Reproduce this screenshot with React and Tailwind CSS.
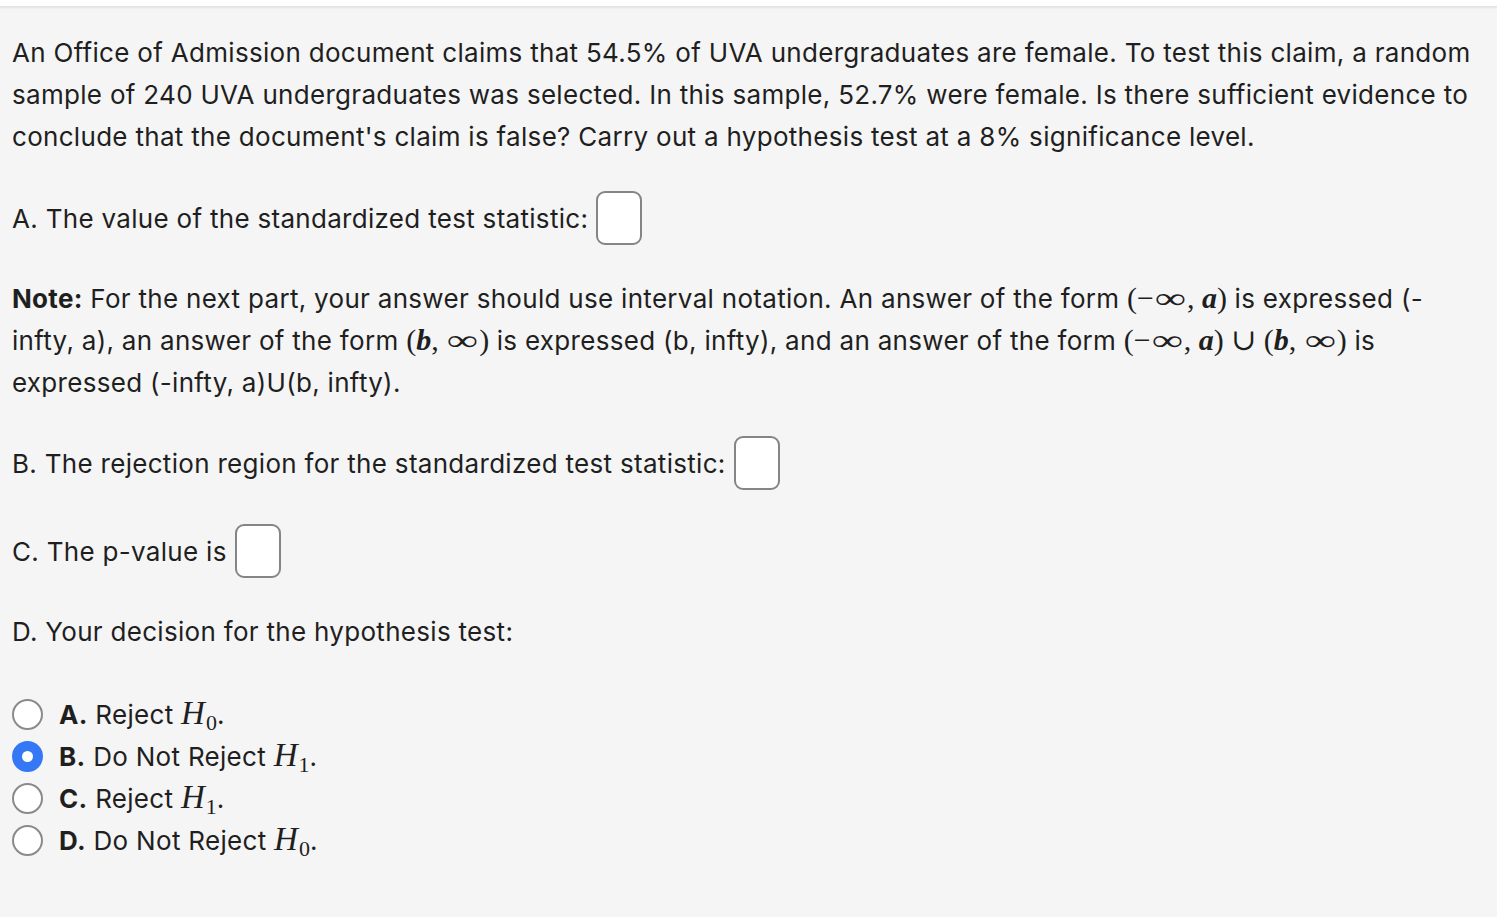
import React from 'react'

const serif = "font-['Liberation_Serif','DejaVu_Serif',serif]"

function M({ children }) {
  return <span className={`${serif} text-[30px] leading-none tracking-normal`}>{children}</span>
}
function I({ children }) {
  return <span className="italic font-semibold">{children}</span>
}
function Inf() {
  return (
    <span className="inline-block w-[33px] text-center">
      <span className="inline-block scale-x-[1.5] text-[29px]">∞</span>
    </span>
  )
}

function Box() {
  return <span className="inline-block ml-[8px] w-[46px] h-[54px] rounded-[9px] border-2 border-[#858585] bg-white shrink-0" />
}

function H({ sub }) {
  return (
    <span className={`${serif} text-[33px] tracking-normal`}>
      <span className="italic">H</span>
      <span className="text-[22px] relative top-[6px] ml-[1px]">{sub}</span>
    </span>
  )
}

function Radio({ checked }) {
  if (checked) {
    return (
      <span className="w-[31px] h-[31px] rounded-full bg-[#3478f6] flex items-center justify-center shrink-0">
        <span className="w-[11px] h-[11px] rounded-full bg-white" />
      </span>
    )
  }
  return <span className="w-[31px] h-[31px] rounded-full border-[2.5px] border-[#8a8a8a] bg-white shrink-0" />
}

const options = [
  { l: 'A.', t: 'Reject', sub: '0', checked: false },
  { l: 'B.', t: 'Do Not Reject', sub: '1', checked: true },
  { l: 'C.', t: 'Reject', sub: '1', checked: false },
  { l: 'D.', t: 'Do Not Reject', sub: '0', checked: false },
]

export default function App() {
  return (
    <div className="min-h-[917px] bg-[#f5f5f5] text-[#1f1f1f] font-['Inter','Noto_Sans',sans-serif] text-[26px] tracking-[0.3px]">
      <div className="h-[7px] bg-white border-b border-[#e2e2e2] shadow-[0_1px_2px_rgba(0,0,0,0.08)]" />
      <div className="px-[12px] pb-10">
        <p className="mt-[25px] leading-[42px]">
          An Office of Admission document claims that 54.5% of UVA undergraduates are female. To test this claim, a random sample of 240 UVA undergraduates was selected. In this sample, 52.7% were female. Is there sufficient evidence to conclude that the document's claim is false? Carry out a hypothesis test at a 8% significance level.
        </p>

        <div className="mt-[33px] flex items-center h-[54px]">
          <span>A. The value of the standardized test statistic:</span>
          <Box />
        </div>

        <p className="mt-[33px] leading-[42px]">
          <span className="font-bold">Note:</span> For the next part, your answer should use interval notation. An answer of the form{' '}
          <M>(−<Inf />, <I>a</I>)</M> is expressed (-infty, a), an answer of the form{' '}
          <M>(<I>b</I>, <Inf />)</M> is expressed (b, infty), and an answer of the form{' '}
          <M>(−<Inf />, <I>a</I>) ∪ (<I>b</I>, <Inf />)</M> is expressed (-infty, a)U(b, infty).
        </p>

        <div className="mt-[32px] flex items-center h-[54px]">
          <span>B. The rejection region for the standardized test statistic:</span>
          <Box />
        </div>

        <div className="mt-[34px] flex items-center h-[54px]">
          <span>C. The p-value is</span>
          <Box />
        </div>

        <p className="mt-[33px] leading-[42px]">D. Your decision for the hypothesis test:</p>

        <div className="mt-[40px] flex flex-col">
          {options.map(o => (
            <div key={o.l} className="flex items-center h-[42px] gap-[16px]">
              <Radio checked={o.checked} />
              <span>
                <span className="font-bold">{o.l}</span> {o.t} <H sub={o.sub} />.
              </span>
            </div>
          ))}
        </div>
      </div>
    </div>
  )
}
